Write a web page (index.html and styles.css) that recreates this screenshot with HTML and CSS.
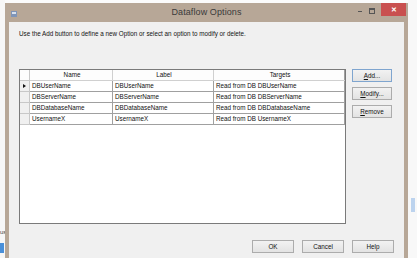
FILE: index.html
```html
<!DOCTYPE html>
<html>
<head>
<meta charset="utf-8">
<link rel="stylesheet" href="styles.css">
</head>
<body>
<div class="desktop">
  <div class="bg-left"><span class="bg-text">us</span><span class="bg-blue"></span></div>
  <div class="bg-right"><span class="bg-blue2"></span></div>
  <div class="window">
    <div class="titlebar">
      <svg class="appicon" width="6" height="6" viewBox="0 0 6 6"><rect x="0" y="0" width="6" height="6" fill="#7f95b8"/><rect x="1" y="1" width="4" height="2" fill="#d8e2ef"/></svg>
      <div class="title">Dataflow Options</div>
      <div class="caps">
        <span class="cap-min"></span>
        <span class="cap-max"></span>
        <span class="cap-close">&#x2715;</span>
      </div>
    </div>
    <div class="client">
      <p class="intro">Use the Add button to define a new Option or select an option to modify or delete.</p>
      <div class="main">
        <div class="grid">
          <table>
            <thead>
              <tr><th class="rh"></th><th class="c1">Name</th><th class="c2">Label</th><th class="c3">Targets</th></tr>
            </thead>
            <tbody>
              <tr><td class="rh"><span class="arrow"></span></td><td>DBUserName</td><td>DBUserName</td><td>Read from DB DBUserName</td></tr>
              <tr><td class="rh"></td><td>DBServerName</td><td>DBServerName</td><td>Read from DB DBServerName</td></tr>
              <tr><td class="rh"></td><td>DBDatabaseName</td><td>DBDatabaseName</td><td>Read from DB DBDatabaseName</td></tr>
              <tr><td class="rh"></td><td>UsernameX</td><td>UsernameX</td><td>Read from DB UsernameX</td></tr>
            </tbody>
          </table>
        </div>
        <div class="side">
          <button class="btn btn-default"><u>A</u>dd...</button>
          <button class="btn"><u>M</u>odify...</button>
          <button class="btn"><u>R</u>emove</button>
        </div>
      </div>
      <div class="footer">
        <button class="btn fbtn">OK</button>
        <button class="btn fbtn">Cancel</button>
        <button class="btn fbtn">Help</button>
      </div>
      <div class="grip"></div>
    </div>
  </div>
</div>
</body>
</html>
```
FILE: styles.css
```css
html, body {
  margin: 0;
  padding: 0;
  background: #ffffff;
}
.desktop {
  position: relative;
  width: 417px;
  height: 258px;
  overflow: hidden;
  background: #fbfbfb;
  font-family: "Liberation Sans", Arial, sans-serif;
}
.bg-left {
  position: absolute;
  left: 0;
  top: 0;
  width: 5px;
  height: 258px;
  background: #f7f7f7;
}
.bg-text {
  position: absolute;
  left: 0;
  top: 229px;
  font-size: 6px;
  color: #444;
}
.bg-blue {
  position: absolute;
  left: 0;
  top: 243px;
  width: 4px;
  height: 10px;
  background: #4a90d9;
}
.bg-right {
  position: absolute;
  right: 0;
  top: 0;
  width: 9px;
  height: 258px;
  background: #f8f8f8;
}
.bg-blue2 {
  position: absolute;
  left: 3px;
  top: 198px;
  width: 4px;
  height: 14px;
  background: #bcd3ee;
}
.window {
  position: absolute;
  left: 5px;
  top: 3px;
  width: 403px;
  height: 262px;
  background: #b7a797;
  display: flex;
  flex-direction: column;
}
.titlebar {
  height: 19px;
  display: flex;
  align-items: center;
  position: relative;
}
.appicon {
  margin-left: 6px;
  margin-top: 2px;
}
.title {
  position: absolute;
  left: 0;
  right: 0;
  top: 4px;
  text-align: center;
  font-size: 9px;
  color: #3a3a3a;
  letter-spacing: 0.1px;
}
.caps {
  margin-left: auto;
  margin-right: 2px;
  align-self: flex-start;
  display: flex;
  align-items: flex-start;
}
.cap-min {
  width: 4px;
  height: 1px;
  background: #555;
  margin-top: 8px;
  margin-right: 7px;
}
.cap-max {
  width: 4px;
  height: 3px;
  border: 1px solid #555;
  border-top-width: 2px;
  margin-top: 5px;
  margin-right: 6px;
}
.cap-close {
  width: 25px;
  height: 13px;
  background: #c9504f;
  color: #fff;
  font-size: 7px;
  line-height: 13px;
  text-align: center;
  font-weight: bold;
}
.client {
  flex: 1;
  margin: 0 4px 0 4px;
  background: #f0f0f0;
  display: flex;
  flex-direction: column;
  padding: 0 0 0 10px;
  position: relative;
}
.intro {
  margin: 8px 0 0 0;
  font-size: 6.3px;
  color: #111;
  height: 8px;
  line-height: 8px;
}
.main {
  display: flex;
  margin-top: 31px;
  gap: 6px;
}
.grid {
  width: 325px;
  height: 153px;
  background: #ffffff;
  border: 1px solid #7a7a7a;
}
table {
  border-collapse: collapse;
  table-layout: fixed;
  font-size: 6.3px;
  color: #111;
}
th, td {
  height: 10px;
  padding: 0 0 0 2px;
  border: 1px solid #a0a0a0;
  white-space: nowrap;
  overflow: hidden;
  text-align: left;
  line-height: 10px;
}
thead th {
  font-weight: normal;
  text-align: center;
  border-top: none;
  border-color: #d0d0d0;
  background: #fdfdfd;
}
th.rh, td.rh {
  width: 9px;
  padding: 0;
  border-left: none;
  background: #f0f0f0;
  border-color: #c8c8c8;
}
thead th.rh {
  background: #fdfdfd;
}
th.c1 { width: 80px; }
th.c2 { width: 98px; }
th.c3 { width: 128px; border-right: 1px solid #a0a0a0; }
tbody td:last-child { border-right: 1px solid #a0a0a0; }
.arrow {
  display: block;
  width: 0;
  height: 0;
  margin-left: 3px;
  border-top: 2.5px solid transparent;
  border-bottom: 2.5px solid transparent;
  border-left: 3px solid #111;
}
.side {
  display: flex;
  flex-direction: column;
  gap: 5px;
}
.btn {
  font-family: "Liberation Sans", Arial, sans-serif;
  font-size: 6.3px;
  color: #111;
  width: 40px;
  height: 13px;
  padding: 0;
  background: linear-gradient(#f2f2f2, #e3e3e3);
  border: 1px solid #acacac;
  border-radius: 0;
  line-height: 11px;
}
.btn-default {
  border-color: #7fa5cf;
}
.footer {
  display: flex;
  justify-content: flex-end;
  gap: 8px;
  margin-top: 16px;
  margin-right: 10px;
}
.fbtn {
  width: 42px;
}
.grip {
  position: absolute;
  right: 2px;
  top: 243px;
  width: 5px;
  height: 5px;
  background: radial-gradient(circle, #b0b0b0 0.6px, transparent 0.8px) 0 0 / 2px 2px;
}
```
